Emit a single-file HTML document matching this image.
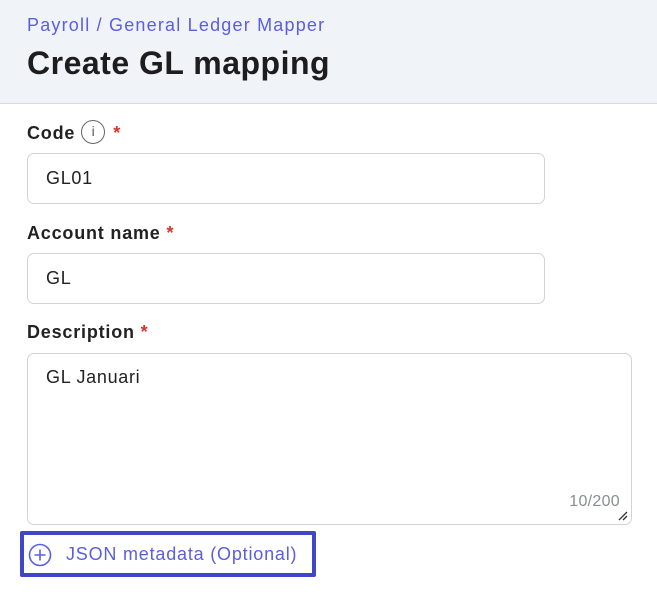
<!DOCTYPE html>
<html><head><style>
*{box-sizing:border-box;margin:0;padding:0}
body{width:657px;height:596px;background:#fff;font-family:"Liberation Sans",sans-serif;position:relative;overflow:hidden;color:#1d1d1f}
.hdr{position:absolute;left:0;top:0;width:657px;height:104px;background:#f0f3f8;border-bottom:1px solid #d6d9de}
.bc{position:absolute;left:27px;top:15px;font-size:18px;color:#5b5ee0;letter-spacing:1.2px}
.t{position:absolute;left:27px;top:45px;font-size:32px;font-weight:bold;color:#1d1d1f;letter-spacing:0.5px}
.lbl{position:absolute;left:27px;font-size:18px;font-weight:bold;color:#222;letter-spacing:0.8px;line-height:22px}
.req{color:#d9342b}
.in{position:absolute;left:27px;border:1px solid #d0d4d9;border-radius:7px;font-size:18px;padding-left:18px;color:#222;letter-spacing:0.7px}
.info{display:inline-block;width:24px;height:24px;border:1.5px solid #666;border-radius:50%;font-size:14px;font-weight:normal;text-align:center;line-height:21px;color:#555;vertical-align:middle;margin:-4px 8px 0 6px;letter-spacing:0}
.btn{position:absolute;left:20px;top:531px;width:296px;height:46px;border:4px solid #4046c8;border-radius:2px;color:#5b5ee0;font-size:18px;letter-spacing:0.8px}
</style></head><body>
<div class="hdr"><div class="bc">Payroll / General Ledger Mapper</div><div class="t">Create GL mapping</div></div>
<div class="lbl" style="top:122px">Code<span class="info">i</span><span class="req">*</span></div>
<div class="in" style="top:153px;width:518px;height:51px;line-height:49px">GL01</div>
<div class="lbl" style="top:222px">Account name <span class="req">*</span></div>
<div class="in" style="top:253px;width:518px;height:51px;line-height:49px">GL</div>
<div class="lbl" style="top:321px">Description <span class="req">*</span></div>
<div class="in" style="top:353px;width:605px;height:172px;padding-top:13px">GL Januari
<span style="position:absolute;right:11px;top:139px;font-size:16px;color:#8a8d91;letter-spacing:0.3px">10/200</span>
<svg style="position:absolute;right:3px;bottom:3px" width="10" height="10"><path d="M1 9L9 1M5 9L9 5" stroke="#333" stroke-width="1.3"/></svg>
</div>
<div class="btn">
<svg style="position:absolute;left:4px;top:8px" width="24" height="24"><circle cx="12" cy="12" r="10.5" fill="none" stroke="#5b5ee0" stroke-width="1.6"/><path d="M12 6.5v11M6.5 12h11" stroke="#5b5ee0" stroke-width="1.6"/></svg>
<span style="position:absolute;left:42px;top:9px">JSON metadata (Optional)</span>
</div>
</body></html>
